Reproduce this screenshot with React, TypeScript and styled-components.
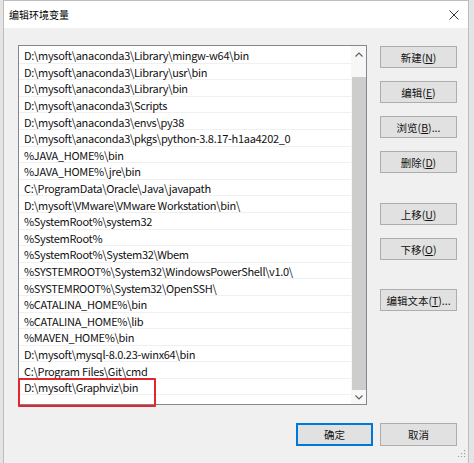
import styled, { createGlobalStyle } from "styled-components";

const GlobalStyle = createGlobalStyle`
  html, body {
    margin: 0;
    padding: 0;
    background: #e4e4e4;
  }
  body {
    font-family: "Noto Sans CJK SC", "Noto Sans", sans-serif;
    font-size: 10px;
    color: #000;
  }
`;

const paths = [
  "D:\\mysoft\\anaconda3\\Library\\mingw-w64\\bin",
  "D:\\mysoft\\anaconda3\\Library\\usr\\bin",
  "D:\\mysoft\\anaconda3\\Library\\bin",
  "D:\\mysoft\\anaconda3\\Scripts",
  "D:\\mysoft\\anaconda3\\envs\\py38",
  "D:\\mysoft\\anaconda3\\pkgs\\python-3.8.17-h1aa4202_0",
  "%JAVA_HOME%\\bin",
  "%JAVA_HOME%\\jre\\bin",
  "C:\\ProgramData\\Oracle\\Java\\javapath",
  "D:\\mysoft\\VMware\\VMware Workstation\\bin\\",
  "%SystemRoot%\\system32",
  "%SystemRoot%",
  "%SystemRoot%\\System32\\Wbem",
  "%SYSTEMROOT%\\System32\\WindowsPowerShell\\v1.0\\",
  "%SYSTEMROOT%\\System32\\OpenSSH\\",
  "%CATALINA_HOME%\\bin",
  "%CATALINA_HOME%\\lib",
  "%MAVEN_HOME%\\bin",
  "D:\\mysoft\\mysql-8.0.23-winx64\\bin",
  "C:\\Program Files\\Git\\cmd",
  "D:\\mysoft\\Graphviz\\bin",
  "",
];

const sideButtons = [
  { label: "新建", key: "N", more: false, gap: 0 },
  { label: "编辑", key: "E", more: false, gap: 0 },
  { label: "浏览", key: "B", more: true, gap: 0 },
  { label: "删除", key: "D", more: false, gap: 0 },
  { label: "上移", key: "U", more: false, gap: 17 },
  { label: "下移", key: "O", more: false, gap: 0 },
  { label: "编辑文本", key: "T", more: true, gap: 16 },
];

const Screen = styled.div`
  width: 474px;
  height: 463px;
  overflow: hidden;
  display: flex;
  padding-left: 3px;
  box-sizing: border-box;
`;

const Dialog = styled.div`
  width: 466px;
  height: 470px;
  display: flex;
  flex-direction: column;
  background: #f0f0f0;
  border: 1px solid #bdbdbd;
  border-bottom: none;
  box-sizing: border-box;
`;

const TitleBar = styled.div`
  height: 27px;
  background: #fff;
  display: flex;
  align-items: center;
  justify-content: space-between;
  padding: 0 9px 0 5px;
  font-size: 10px;
`;

const Body = styled.div`
  display: flex;
  flex-direction: column;
  padding: 17px 11px 0 14px;
`;

const Main = styled.div`
  display: flex;
  gap: 13px;
  align-items: flex-start;
`;

const ListBox = styled.div`
  position: relative;
  width: 349px;
  height: 360px;
  box-sizing: border-box;
  border: 1px solid #828790;
  background: #fff;
  display: flex;
`;

const Rows = styled.div`
  flex: 1;
  padding-top: 1px;
  overflow: hidden;
`;

const Row = styled.div`
  height: 16.6px;
  box-sizing: border-box;
  border-bottom: 1px solid #f0f0f0;
  padding-left: 5px;
  display: flex;
  align-items: center;
  padding-top: 1px;
  white-space: nowrap;
  font-size: 11px;
  letter-spacing: -0.3px;
  color: #111;
`;

const ScrollBar = styled.div`
  width: 15px;
  display: flex;
  flex-direction: column;
  background: #f7f7f7;
`;

const ArrowBox = styled.div<{ $h: number }>`
  height: ${(p) => p.$h}px;
  display: flex;
  align-items: center;
  justify-content: center;
`;

const Track = styled.div`
  flex: 1;
  display: flex;
  padding-top: 14px;
  padding-left: 1px;
`;

const Thumb = styled.div`
  flex: 1;
  background: #cdcdcd;
`;

const Highlight = styled.div`
  position: absolute;
  left: -1px;
  top: 332px;
  width: 138px;
  height: 29px;
  box-sizing: border-box;
  border: 2px solid #e3262d;
  border-radius: 1px;
`;

const ButtonColumn = styled.div`
  display: flex;
  flex-direction: column;
  gap: 13px;
  padding-top: 1px;
`;

const Button = styled.div<{ $gap?: number; $primary?: boolean; $h?: number }>`
  width: 77px;
  height: ${(p) => p.$h ?? 22}px;
  margin-top: ${(p) => p.$gap ?? 0}px;
  box-sizing: border-box;
  background: #e1e1e1;
  border: 1px solid ${(p) => (p.$primary ? "#0078d7" : "#adadad")};
  box-shadow: ${(p) => (p.$primary ? "inset 0 0 0 1px #0078d7" : "none")};
  display: flex;
  align-items: center;
  justify-content: center;
  font-size: 10.5px;
  color: #111;
`;

const Key = styled.span`
  text-decoration: underline;
  text-underline-offset: 1px;
`;

const Footer = styled.div`
  display: flex;
  justify-content: flex-end;
  gap: 7px;
  margin-top: 18px;
`;

const Grip = styled.div`
  display: flex;
  justify-content: flex-end;
  margin-top: 3px;
  margin-right: -9px;
`;

const ArrowIcon = ({ up }: { up: boolean }) => (
  <svg width="8" height="5" viewBox="0 0 8 5">
    <path
      d={up ? "M0.5 4.5 L4 1 L7.5 4.5" : "M0.5 0.5 L4 4 L7.5 0.5"}
      fill="none"
      stroke="#606060"
      strokeWidth="1.2"
    />
  </svg>
);

const CloseIcon = () => (
  <svg width="10" height="10" viewBox="0 0 10 10">
    <path d="M0.5 0.5 L9.5 9.5 M9.5 0.5 L0.5 9.5" stroke="#333" strokeWidth="1" />
  </svg>
);

const GripIcon = () => (
  <svg width="8" height="8" viewBox="0 0 8 8">
    {[
      [6, 1],
      [6, 4],
      [3, 4],
      [6, 7],
      [3, 7],
      [0, 7],
    ].map(([x, y]) => (
      <rect key={`${x}-${y}`} x={x} y={y} width="1.2" height="1.2" fill="#a0a0a0" />
    ))}
  </svg>
);

const App = () => {
  return (
    <>
      <GlobalStyle />
      <Screen>
        <Dialog>
          <TitleBar>
            <span>编辑环境变量</span>
            <CloseIcon />
          </TitleBar>
          <Body>
            <Main>
              <ListBox>
                <Rows>
                  {paths.map((p, i) => (
                    <Row key={i}>{p}</Row>
                  ))}
                </Rows>
                <ScrollBar>
                  <ArrowBox $h={17}>
                    <ArrowIcon up />
                  </ArrowBox>
                  <Track>
                    <Thumb />
                  </Track>
                  <ArrowBox $h={14}>
                    <ArrowIcon up={false} />
                  </ArrowBox>
                </ScrollBar>
                <Highlight />
              </ListBox>
              <ButtonColumn>
                {sideButtons.map((b) => (
                  <Button key={b.label} $gap={b.gap}>
                    {b.label}(<Key>{b.key}</Key>){b.more ? "..." : ""}
                  </Button>
                ))}
              </ButtonColumn>
            </Main>
            <Footer>
              <Button $primary $h={23}>
                确定
              </Button>
              <Button $h={23}>取消</Button>
            </Footer>
            <Grip>
              <GripIcon />
            </Grip>
          </Body>
        </Dialog>
      </Screen>
    </>
  );
};

export default App;
